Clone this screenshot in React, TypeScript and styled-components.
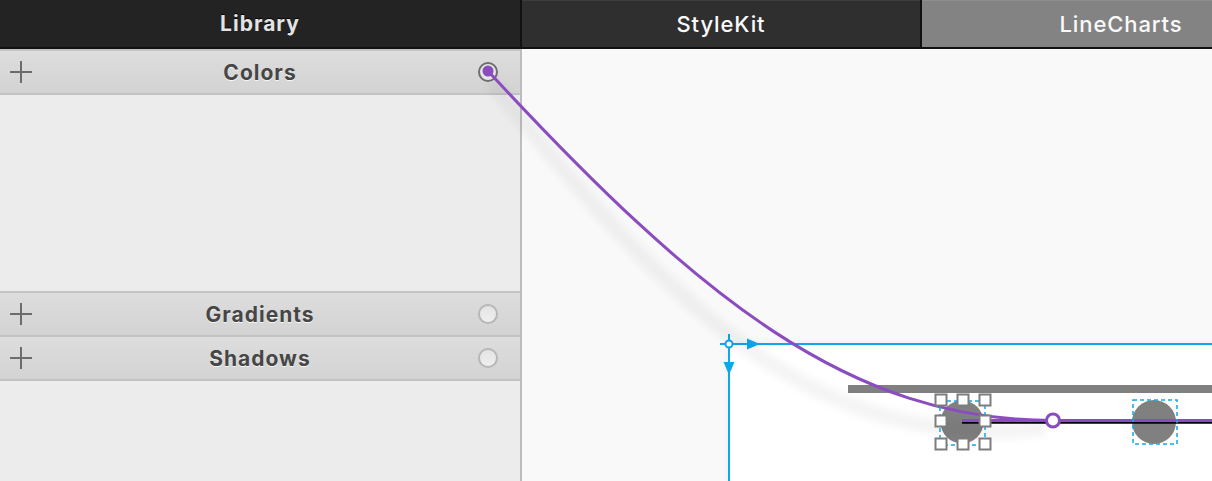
import styled, { createGlobalStyle } from 'styled-components';

const GlobalStyle = createGlobalStyle`
  html, body {
    margin: 0;
    padding: 0;
    background: #f9f9f9;
  }
  * {
    box-sizing: border-box;
  }
`;

const PURPLE = '#8b4cbf';
const BLUE = '#0fa6ee';

const sections = [
  { name: 'Colors', active: true, body: 198 },
  { name: 'Gradients', active: false, body: 0 },
  { name: 'Shadows', active: false, body: 0 },
];

// selection handles around the first chart point
const handles = [
  [941, 400], [963, 400], [985, 400],
  [941, 421], [985, 421],
  [941, 444], [963, 444], [985, 444],
];

function PlusIcon() {
  return (
    <svg width="24" height="24" viewBox="0 0 24 24">
      <path d="M12 1v22M1 12h22" stroke="#6c6c6c" strokeWidth="2" fill="none" />
    </svg>
  );
}

function App() {
  return (
    <Page>
      <GlobalStyle />
      <TopBar>
        <LibraryTitle>Library</LibraryTitle>
        <Tab>StyleKit</Tab>
        <Tab $inactive>LineCharts</Tab>
      </TopBar>

      <Main>
        <Sidebar>
          {sections.map((s) => (
            <div key={s.name}>
              <SectionHeader>
                <PlusButton>
                  <PlusIcon />
                </PlusButton>
                <SectionTitle>{s.name}</SectionTitle>
                <Radio $active={s.active} />
              </SectionHeader>
              {s.body > 0 && <SectionBody style={{ height: s.body }} />}
            </div>
          ))}
        </Sidebar>

        <Canvas>
          <Artboard>
            <svg width="500" height="140" viewBox="730 345 500 140">
              <rect x="848" y="385" width="400" height="8" fill="#808080" />
              <circle cx="962" cy="422" r="21.5" fill="#808080" />
              <circle cx="1154" cy="422" r="22" fill="#808080" />
              <line x1="962" y1="422.8" x2="1230" y2="422.8" stroke="#000" strokeWidth="2" />
            </svg>
          </Artboard>
        </Canvas>
      </Main>

      <Overlay width="1212" height="481" viewBox="0 0 1212 481">
        <defs>
          <filter id="soft" x="-20%" y="-20%" width="140%" height="140%">
            <feGaussianBlur stdDeviation="3.5" />
          </filter>
        </defs>

        {/* artboard origin marker */}
        <line x1="720" y1="344" x2="1212" y2="344" stroke={BLUE} strokeWidth="2" />
        <line x1="729" y1="334" x2="729" y2="481" stroke={BLUE} strokeWidth="2" />
        <circle cx="729" cy="344" r="3.5" fill="#fff" stroke={BLUE} strokeWidth="2" />
        <path d="M747 338.5 L760 344 L747 349.5 Z" fill={BLUE} />
        <path d="M723.5 362 L729 375 L734.5 362 Z" fill={BLUE} />

        {/* connection shadow */}
        <path
          d="M492 82 C 690 335 830 450 1045 428"
          stroke="#000"
          strokeOpacity="0.04"
          strokeWidth="16"
          fill="none"
          filter="url(#soft)"
        />

        {/* connection */}
        <line x1="962" y1="420.5" x2="1212" y2="420.5" stroke={PURPLE} strokeWidth="3" />
        <path
          d="M488 71 C 700 300 850 420.5 1053 420.5"
          stroke={PURPLE}
          strokeWidth="3"
          fill="none"
        />
        <circle cx="1053" cy="420.5" r="6.5" fill="#fff" stroke={PURPLE} strokeWidth="3" />
        <circle cx="488" cy="71" r="5.5" fill={PURPLE} />

        {/* selection */}
        <rect x="940" y="401" width="45" height="44" fill="none" stroke={BLUE} strokeWidth="1.5" strokeDasharray="4 3" />
        <rect x="1133" y="400" width="44" height="44" fill="none" stroke={BLUE} strokeWidth="1.5" strokeDasharray="4 3" />
        {handles.map(([x, y]) => (
          <rect key={`${x}-${y}`} x={x - 5.5} y={y - 5.5} width="11" height="11" fill="#fff" stroke="#7d7d7d" strokeWidth="2" />
        ))}
      </Overlay>
    </Page>
  );
}

export default App;

const Page = styled.div`
  position: relative;
  width: 1212px;
  height: 481px;
  overflow: hidden;
  font-family: Inter, "Liberation Sans", sans-serif;
`;

const TopBar = styled.header`
  display: flex;
  height: 49px;
  background: #111;
  border-bottom: 2px solid #111;
`;

const LibraryTitle = styled.div`
  width: 520px;
  flex-shrink: 0;
  display: flex;
  align-items: center;
  justify-content: center;
  background: #232323;
  color: #e4e4e4;
  font-size: 21px;
  font-weight: 700;
  letter-spacing: 1px;
  text-shadow: 0 -1px 0 #000;
  margin-right: 2px;
`;

const Tab = styled.div<{ $inactive?: boolean }>`
  width: 398px;
  flex-shrink: 0;
  display: flex;
  align-items: center;
  justify-content: center;
  background: ${(p) => (p.$inactive ? '#838383' : '#2f2f2f')};
  border-top: 1px solid ${(p) => (p.$inactive ? '#8e8e8e' : '#3c3c3c')};
  color: #fafafa;
  font-size: 22px;
  font-weight: 500;
  letter-spacing: 0.9px;
  margin-right: 2px;
`;

const Main = styled.div`
  display: flex;
  height: 432px;
`;

const Sidebar = styled.aside`
  width: 522px;
  flex-shrink: 0;
  background: #ececec;
  border-top: 2px solid #c4c4c4;
  border-right: 2px solid #bdbdbd;
`;

const SectionHeader = styled.div`
  position: relative;
  height: 44px;
  display: flex;
  align-items: center;
  justify-content: center;
  background: linear-gradient(#dddddd, #d3d3d3);
  border-bottom: 2px solid #c3c3c3;
`;

const PlusButton = styled.span`
  position: absolute;
  left: 9px;
  top: 9px;
  display: flex;
`;

const SectionTitle = styled.span`
  color: #464646;
  font-size: 21px;
  font-weight: 700;
  letter-spacing: 1px;
  text-shadow: 0 1px 0 rgba(255, 255, 255, 0.8);
`;

const Radio = styled.span<{ $active?: boolean }>`
  position: absolute;
  right: 22px;
  top: 11px;
  width: 20px;
  height: 20px;
  border-radius: 50%;
  border: 2px solid ${(p) => (p.$active ? '#6e6e6e' : '#b6b6b6')};
  background: ${(p) => (p.$active ? '#e6e6e6' : 'linear-gradient(#e4e4e4, #efefef)')};
`;

const SectionBody = styled.div`
  background: #ececec;
  border-bottom: 2px solid #c3c3c3;
`;

const Canvas = styled.main`
  position: relative;
  flex: 1;
  background: #f9f9f9;
`;

const Artboard = styled.div`
  position: absolute;
  left: 208px;
  top: 296px;
  width: 500px;
  height: 140px;
  background: #fff;
  box-shadow: 0 0 8px rgba(0, 0, 0, 0.08);

  svg {
    display: block;
  }
`;

const Overlay = styled.svg`
  position: absolute;
  left: 0;
  top: 0;
  pointer-events: none;
`;
